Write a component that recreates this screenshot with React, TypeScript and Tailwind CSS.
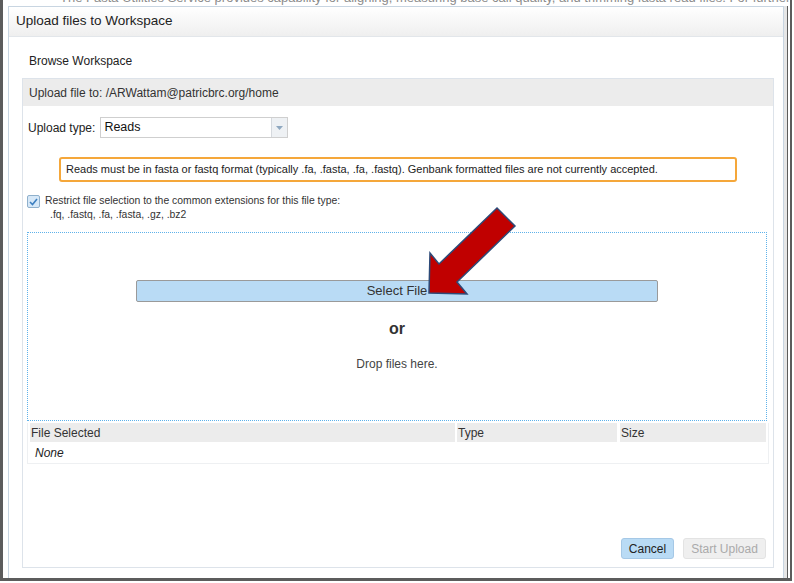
import React from "react";

export default function App() {
  return (
    <div className="relative w-[794px] h-[583px] bg-white overflow-hidden" style={{ fontFamily: '"Liberation Sans", Arial, sans-serif' }}>
      <div className="w-[792px] h-[581px] border-l-[3px] border-r-[2px] border-b-[3px] border-[#5c5c5c] flex flex-col">
        {/* background text strip */}
        <div className="h-[6px] overflow-hidden">
          <div className="pl-[57px] -mt-[9px] leading-[14px] text-[13px] text-[#8c8c8c] whitespace-nowrap">
            The Fasta Utilities Service provides capability for aligning, measuring base call quality, and trimming fasta read files. For further
          </div>
        </div>
        <div className="flex flex-1 min-h-0">
          <div className="ml-[5px] w-[776px] border border-b-0 border-[#c8d5e1] flex flex-col bg-white">
            {/* title bar */}
            <div className="h-[30px] flex items-center pl-[7px] bg-gradient-to-b from-white to-[#efefef] border-b border-[#e2e6ea] text-[13.5px] text-[#222]">
              Upload files to Workspace
            </div>
            {/* body */}
            <div className="flex flex-col">
              <div className="pl-[20px] pt-[16px] text-[12px] leading-[16px] text-[#222]">Browse Workspace</div>
              <div className="ml-[13px] mt-[9px] w-[752px] h-[490px] border border-[#dde3ea] flex flex-col">
                <div className="h-[27px] bg-[#ececec] flex items-center pl-[6px] text-[12px] text-[#333]">
                  Upload file to: /ARWattam@patricbrc.org/home
                </div>
                <div className="flex items-center mt-[11px] pl-[5px]">
                  <span className="text-[12px] text-[#222] mr-[5px]">Upload type:</span>
                  <div className="w-[188px] h-[21px] border border-[#cfcfcf] flex">
                    <div className="flex-1 flex items-center pl-[3px] text-[12.5px] text-[#111]">Reads</div>
                    <div className="w-[16px] border-l border-[#d5d9de] bg-[#eef1f4] flex items-center justify-center">
                      <svg width="7" height="4" viewBox="0 0 7 4"><path d="M0 0 L7 0 L3.5 4 Z" fill="#8fa8c0" /></svg>
                    </div>
                  </div>
                </div>
                <div className="ml-[36px] mt-[19px] w-[678px] h-[25px] border-2 border-[#f5a73a] rounded-[3px] flex items-center pl-[5px] text-[11px] text-[#222]">
                  Reads must be in fasta or fastq format (typically .fa, .fasta, .fa, .fastq). Genbank formatted files are not currently accepted.
                </div>
                <div className="flex mt-[12px] pl-[4px]">
                  <div className="w-[13px] h-[13px] border border-[#8fb0cc] bg-[#d6e8f8] rounded-[2px] flex items-center justify-center mt-[1px]">
                    <svg width="9" height="8" viewBox="0 0 9 8"><path d="M1 4 L3.5 6.5 L8 1" stroke="#3d7fc0" strokeWidth="1.6" fill="none" /></svg>
                  </div>
                  <div className="ml-[5px] text-[10.4px] leading-[14px] text-[#333]">
                    <div>Restrict file selection to the common extensions for this file type:</div>
                    <div className="pl-[5px]">.fq, .fastq, .fa, .fasta, .gz, .bz2</div>
                  </div>
                </div>
                <div className="ml-[4px] mt-[10px] w-[740px] h-[189px] border border-dotted border-[#5fb2ea] flex flex-col items-center">
                  <div className="mt-[47px] w-[522px] h-[22px] bg-[#b9dbf5] border border-[#9a9a9a] rounded-[2px] flex items-center justify-center text-[13px] text-[#333]">
                    Select File
                  </div>
                  <div className="mt-[17px] text-[16px] font-bold text-[#333] leading-[20px]">or</div>
                  <div className="mt-[16px] text-[12px] text-[#444]">Drop files here.</div>
                </div>
                <div className="ml-[4px] mt-[2px] w-[742px] border-b border-l border-r border-[#eef0f2] flex flex-col px-[2px]">
                  <div className="h-[19px] flex text-[12px] text-[#333] gap-[2px]">
                    <div className="w-[425px] bg-[#ececec] flex items-center pl-[1px]">File Selected</div>
                    <div className="w-[160px] bg-[#ececec] flex items-center pl-[1px]">Type</div>
                    <div className="flex-1 ml-[1px] bg-[#ececec] flex items-center pl-[1px]">Size</div>
                  </div>
                  <div className="h-[21px] flex items-center pl-[5px] text-[12px] italic text-[#222]">None</div>
                </div>
                <div className="flex-1" />
                <div className="flex justify-end gap-[9px] pr-[7px] pb-[8px]">
                  <div className="w-[53px] h-[21px] bg-[#b9dbf5] border border-[#a5c8e6] rounded-[3px] flex items-center justify-center text-[12px] text-[#222]">
                    Cancel
                  </div>
                  <div className="w-[83px] h-[21px] bg-[#efefef] border border-[#e3e3e3] rounded-[3px] flex items-center justify-center text-[12px] text-[#aaa]">
                    Start Upload
                  </div>
                </div>
              </div>
            </div>
          </div>
          <div className="w-[3px] bg-[#e6e6e6]" />
          <div className="w-[1px] bg-[#5c5c5c]" />
          <div className="w-[2px]" />
        </div>
      </div>
      <svg className="absolute left-0 top-0 pointer-events-none" width="794" height="583" viewBox="0 0 794 583">
        <polygon
          points="429,293 430,253 439,264 497,208 515,226 457,282 467,294"
          fill="#c00000"
          stroke="#2c4a78"
          strokeWidth="1.5"
          strokeLinejoin="miter"
        />
      </svg>
    </div>
  );
}
